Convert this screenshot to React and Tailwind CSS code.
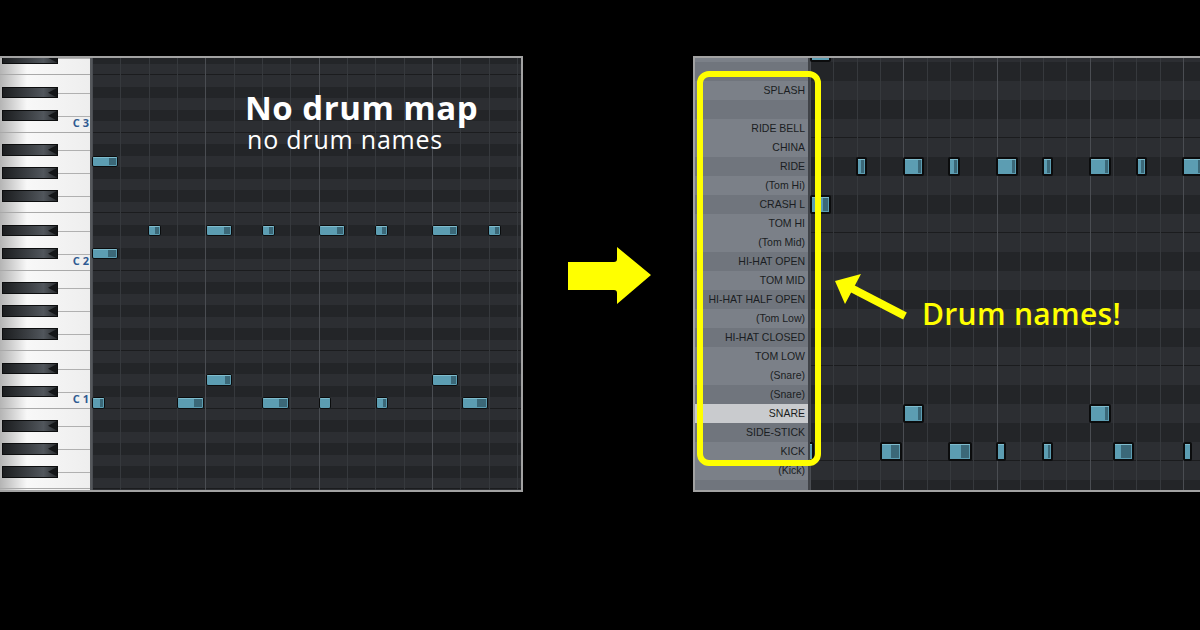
import React from "react";

const BLACK_KEYS = new Set([1, 3, 6, 8, 10]);
const isBlack = (n) => BLACK_KEYS.has(n % 12);
const isEdge = (n) => n % 12 === 0 || n % 12 === 5;
const range = (hi, lo) => Array.from({ length: hi - lo + 1 }, (_, i) => hi - i);

// piano roll: F#3 down to E0, 11.5px per semitone
const PIANO_ROWS = range(66, 28);
const PIANO_ROW_H = 11.5;
const PIANO_OFFSET = -5.75;

// drum editor: A2 down to A#0, 19px per lane
const DRUM_ROWS = range(57, 34);
const DRUM_ROW_H = 19;
const DRUM_OFFSET = -15.5;

const DRUM_NAMES = {
  55: "SPLASH",
  53: "RIDE BELL",
  52: "CHINA",
  51: "RIDE",
  50: "(Tom Hi)",
  49: "CRASH L",
  48: "TOM HI",
  47: "(Tom Mid)",
  46: "HI-HAT OPEN",
  45: "TOM MID",
  44: "HI-HAT HALF OPEN",
  43: "(Tom Low)",
  42: "HI-HAT CLOSED",
  41: "TOM LOW",
  40: "(Snare)",
  39: "(Snare)",
  38: "SNARE",
  37: "SIDE-STICK",
  36: "KICK",
  35: "(Kick)",
};

// [pitch, x, width, velocity bar width]
const PIANO_NOTES = [
  [57, 0, 26, 7],
  [51, 56, 13, 4],
  [51, 114, 26, 6],
  [51, 170, 13, 4],
  [51, 227, 26, 6],
  [51, 283, 13, 4],
  [51, 340, 26, 6],
  [51, 396, 13, 4],
  [49, 0, 26, 8],
  [38, 114, 26, 5],
  [38, 340, 26, 5],
  [36, 0, 13, 3],
  [36, 85, 27, 8],
  [36, 170, 27, 8],
  [36, 227, 12, 0],
  [36, 284, 12, 3],
  [36, 370, 26, 9],
];

const DRUM_NOTES = [
  [57, 0, 21, 0],
  [51, 46, 11, 3],
  [51, 93, 21, 3],
  [51, 138, 12, 3],
  [51, 186, 22, 3],
  [51, 232, 11, 3],
  [51, 279, 22, 3],
  [51, 326, 11, 3],
  [51, 372, 22, 3],
  [49, 0, 21, 5],
  [38, 93, 21, 3],
  [38, 279, 22, 3],
  [36, -8, 12, 0],
  [36, 70, 22, 8],
  [36, 138, 24, 8],
  [36, 186, 10, 0],
  [36, 232, 11, 2],
  [36, 303, 21, 10],
  [36, 373, 9, 0],
];

function GridLines({ beat, count }) {
  const sixteenth = beat / 4;
  return Array.from({ length: count }, (_, i) => (
    <div
      key={i}
      className={`absolute top-0 bottom-0 w-px ${i % 4 === 0 ? "bg-[#4a4d52]" : "bg-[#36393d]"}`}
      style={{ left: Math.round(i * sixteenth) }}
    />
  ));
}

function NoteBlock({ top, x, w, h, v, thick }) {
  return (
    <div
      className={`absolute overflow-hidden rounded-[2px] bg-[#5c9db2] ${thick ? "border-2 border-[#0b0c0d]" : "border border-[#0b0c0d]"}`}
      style={{ top, left: x, width: w, height: h }}
    >
      <div className="absolute inset-x-0 top-0 h-px bg-[#7fbccd]" />
      {v > 0 && (
        <div
          className="absolute top-[1px] bottom-[1px] right-[1px] bg-[#3b6878]"
          style={{ width: v }}
        />
      )}
    </div>
  );
}

function PianoKey({ n }) {
  const black = isBlack(n);
  return (
    <div className={`relative h-[11.5px] ${isEdge(n) ? "border-b border-[#a9a9a9]" : ""}`}>
      {black && (
        <>
          <div className="absolute left-[2px] top-0 h-full w-[56px] overflow-hidden border border-[#0d0e0f] bg-linear-to-r from-[#1c1e20] via-[#51565c] via-75% to-[#2a2d30]">
            <svg className="absolute right-0 top-0 h-full w-[9px]" viewBox="0 0 9 10" preserveAspectRatio="none">
              <polygon points="0,5 9,0 9,10" fill="#141618" />
            </svg>
          </div>
          <div className="absolute left-[58px] right-0 top-1/2 h-px bg-[#b0b0b0]" />
        </>
      )}
      {n % 12 === 0 && (
        <span className="absolute right-[1px] -top-[4px] text-[11px] font-bold leading-[12px] text-[#2f5a92]">
          C {n / 12 - 2}
        </span>
      )}
    </div>
  );
}

function GridRow({ n, tall }) {
  const shade = isBlack(n) ? "bg-[#232528]" : "bg-[#2c2e32]";
  const edge = isEdge(n) ? "border-b border-[#1b1c1e]" : "";
  return <div className={`${tall ? "h-[19px]" : "h-[11.5px]"} ${shade} ${edge}`} />;
}

function PianoRoll() {
  return (
    <div className="flex h-[436px] w-[523px] border-y-2 border-r-2 border-[#a2a2a2]">
      <div className="relative w-[90px] overflow-hidden bg-linear-to-r from-[#b4b4b4] via-[#f8f8f8] via-30% to-[#eeeeee]">
        <div className="mt-[-5.75px]">
          {PIANO_ROWS.map((n) => (
            <PianoKey key={n} n={n} />
          ))}
        </div>
      </div>
      <div className="w-[2px] bg-[#55585c]" />
      <div className="relative flex-1 overflow-hidden">
        <div className="mt-[-5.75px]">
          {PIANO_ROWS.map((n) => (
            <GridRow key={n} n={n} />
          ))}
        </div>
        <GridLines beat={113.33} count={16} />
        {PIANO_NOTES.map(([n, x, w, v], i) => (
          <NoteBlock
            key={i}
            top={PIANO_OFFSET + (66 - n) * PIANO_ROW_H}
            x={x}
            w={w}
            h={PIANO_ROW_H}
            v={v}
          />
        ))}
      </div>
    </div>
  );
}

function DrumEditor() {
  return (
    <div className="flex h-[436px] w-[507px] border-y-2 border-l-2 border-[#a2a2a2]">
      <div className="w-[115px] overflow-hidden border-r-2 border-[#404348] bg-[#787d85] font-['Liberation_Sans',Arial,sans-serif]">
        <div className="mt-[-15.5px]">
          {DRUM_ROWS.map((n) => (
            <div
              key={n}
              className={`flex h-[19px] items-center justify-end pr-[3px] text-[10.5px] leading-none ${
                n === 38 ? "bg-[#c9cbce] text-[#1a1c20]" : isBlack(n) ? "bg-[#70757d] text-[#1a1d22]" : "bg-[#7b8088] text-[#1a1d22]"
              }`}
            >
              {DRUM_NAMES[n] || ""}
            </div>
          ))}
        </div>
      </div>
      <div className="relative flex-1 overflow-hidden">
        <div className="mt-[-15.5px]">
          {DRUM_ROWS.map((n) => (
            <GridRow key={n} n={n} tall />
          ))}
        </div>
        <GridLines beat={93.25} count={17} />
        {DRUM_NOTES.map(([n, x, w, v], i) => (
          <NoteBlock
            key={i}
            top={DRUM_OFFSET + (57 - n) * DRUM_ROW_H}
            x={x}
            w={w}
            h={DRUM_ROW_H}
            v={v}
            thick
          />
        ))}
      </div>
    </div>
  );
}

export default function App() {
  return (
    <div className="relative h-[630px] w-[1200px] overflow-hidden bg-black font-['Open_Sans',sans-serif]">
      <div className="flex items-start pt-[56px]">
        <PianoRoll />
        <div className="w-[170px] pl-[45px] pt-[190px]">
          <svg width="84" height="60" viewBox="0 0 84 60">
            <path d="M0 16 H46 Q49 16 49 13 V1 L83 29 L49 58 V47 Q49 44 46 44 H0 Z" fill="#ffff00" />
          </svg>
        </div>
        <DrumEditor />
      </div>

      {/* caption over the piano roll */}
      <div className="absolute left-[245px] top-[91px] flex flex-col leading-none text-white">
        <span className="text-[33px] font-bold tracking-[0.5px]">No drum map</span>
        <span className="mt-[3px] ml-[2px] text-[25px] tracking-[0.8px]">no drum names</span>
      </div>

      <div className="absolute left-[697px] top-[71px] h-[395px] w-[124px] rounded-[12px] border-[6px] border-[#ffff00]" />

      <svg className="absolute left-[820px] top-[265px]" width="100" height="60" viewBox="0 0 100 60">
        <line x1="31" y1="23" x2="85" y2="51" stroke="#ffff00" strokeWidth="8" />
        <polygon points="15,16 41,9 25,39" fill="#ffff00" />
      </svg>

      <div className="absolute left-[922px] top-[299px] text-[30px] font-semibold leading-none tracking-[0.3px] text-[#ffff00]">
        Drum names!
      </div>
    </div>
  );
}
